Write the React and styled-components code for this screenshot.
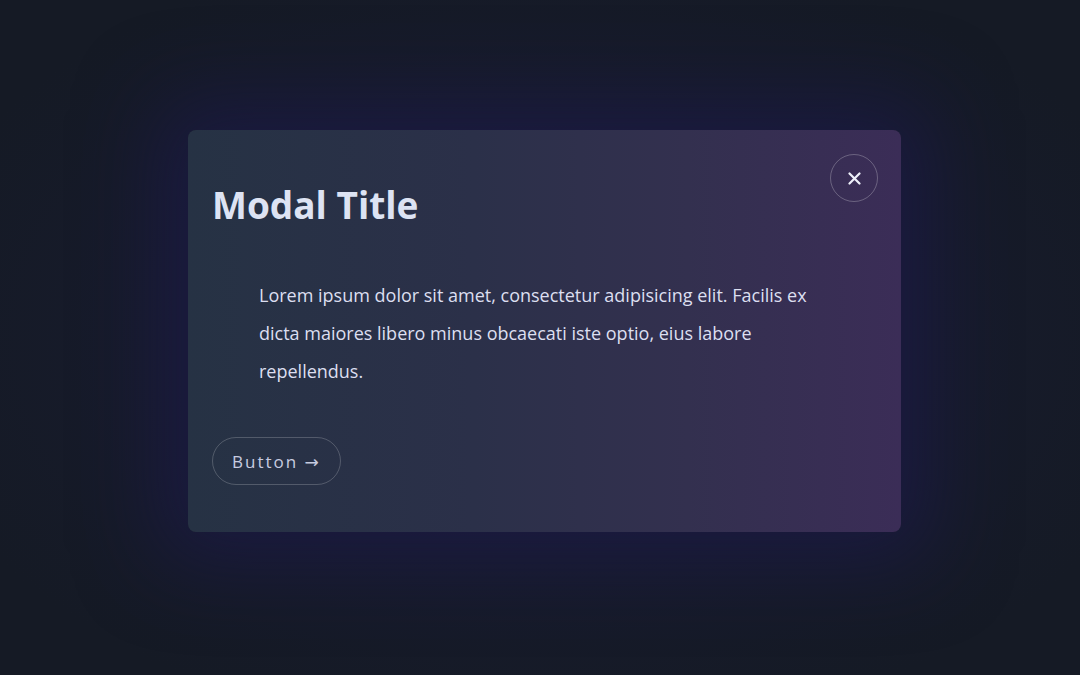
import React from "react";
import styled, { createGlobalStyle } from "styled-components";

const Global = createGlobalStyle`
  html, body { margin: 0; padding: 0; }
  body {
    background: #151a25;
    font-family: "Open Sans", "Noto Sans", sans-serif;
  }
`;

const Page = styled.div`
  width: 1080px;
  height: 675px;
  display: flex;
  align-items: flex-start;
  justify-content: center;
  padding: 130px 0 0 9px;
  box-sizing: border-box;
  background: radial-gradient(ellipse 60% 60% at 50% 50%, #1a1d36 0%, #171b2c 55%, #151a25 100%);
`;

const Modal = styled.section`
  width: 713px;
  height: 402px;
  box-sizing: border-box;
  padding: 24px 23px 24px 24px;
  border-radius: 8px;
  background: linear-gradient(90deg, #263244 0%, #2b3049 40%, #33304f 70%, #3b2d57 100%);
  box-shadow: 0 0 80px 30px rgba(30, 26, 80, 0.55);
  display: flex;
  flex-direction: column;
`;

const Header = styled.header`
  display: flex;
  justify-content: space-between;
  align-items: flex-start;
`;

const Title = styled.h2`
  margin: 25px 0 0;
  font-size: 37px;
  font-weight: 700;
  line-height: 52px;
  color: #dde3f3;
`;

const CloseButton = styled.button`
  width: 48px;
  height: 48px;
  border-radius: 50%;
  border: 1px solid rgba(255, 255, 255, 0.25);
  background: transparent;
  display: flex;
  align-items: center;
  justify-content: center;
  padding: 0;
  cursor: pointer;
`;

const Body = styled.p`
  margin: 45px 0 0;
  padding: 0 47px;
  font-size: 18px;
  line-height: 38px;
  color: #dcdff0;
`;

const Footer = styled.div`
  margin-top: 47px;
  display: flex;
`;

const ActionButton = styled.button`
  height: 48px;
  padding: 0 19px;
  border-radius: 24px;
  border: 1px solid rgba(255, 255, 255, 0.2);
  background: transparent;
  color: #c7cce0;
  font-family: "Open Sans", sans-serif;
  font-size: 17px;
  letter-spacing: 2px;
  cursor: pointer;
`;

const Arrow = styled.span`
  font-family: "DejaVu Sans", sans-serif;
  font-size: 17px;
`;

export default function App() {
  return (
    <>
      <Global />
      <Page>
        <Modal>
          <Header>
            <Title>Modal Title</Title>
            <CloseButton aria-label="Close">
              <svg width="13" height="13" viewBox="0 0 13 13">
                <path d="M1.5 1.5 L11.5 11.5 M11.5 1.5 L1.5 11.5" stroke="#eef0fa" strokeWidth="2.2" strokeLinecap="round" />
              </svg>
            </CloseButton>
          </Header>
          <Body>
            Lorem ipsum dolor sit amet, consectetur adipisicing elit. Facilis ex dicta maiores libero minus obcaecati iste optio, eius labore repellendus.
          </Body>
          <Footer>
            <ActionButton>
              Button <Arrow>→</Arrow>
            </ActionButton>
          </Footer>
        </Modal>
      </Page>
    </>
  );
}
